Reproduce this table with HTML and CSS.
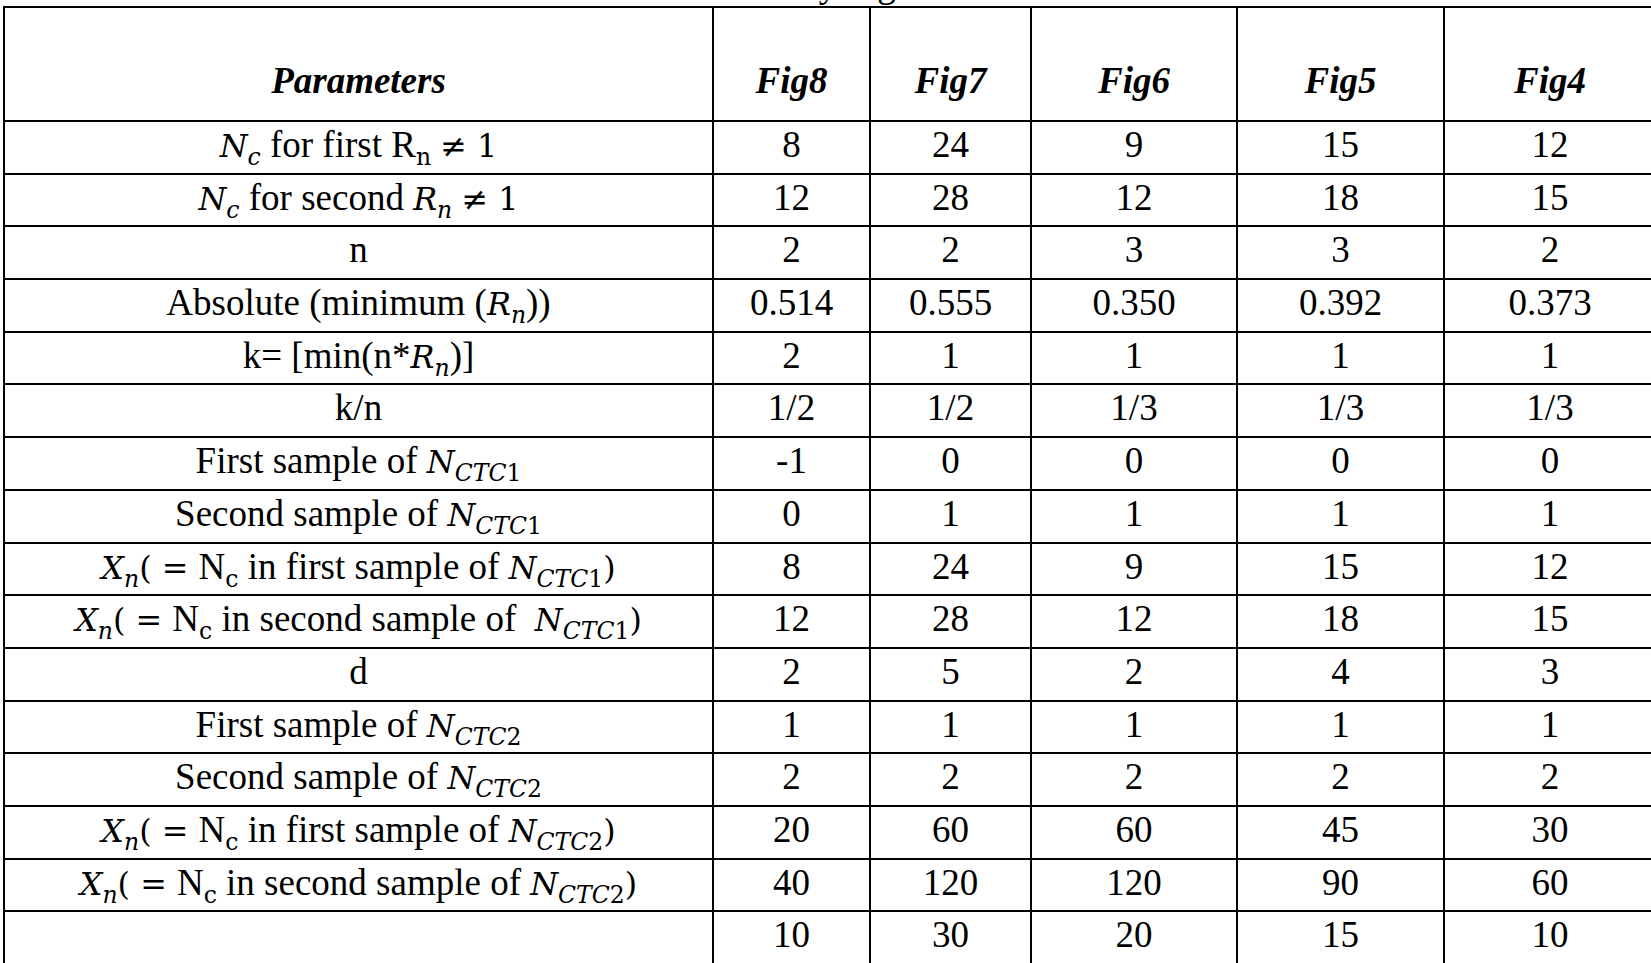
FILE: index.html
```html
<!DOCTYPE html>
<html lang="en">
<head>
<meta charset="utf-8">
<title>Parameters by figure</title>
<link rel="stylesheet" href="styles.css">
</head>
<body>
<div class="caption"><span class="caption-text">Table 2. Parameters obtained by Figures</span></div>
<div class="grid">
  <div class="cell head">Parameters</div>
  <div class="cell head">Fig8</div>
  <div class="cell head">Fig7</div>
  <div class="cell head">Fig6</div>
  <div class="cell head">Fig5</div>
  <div class="cell head">Fig4</div>

  <div class="cell"><span class="m">N<span class="sub">c</span></span> for first R<span class="mu"><span class="sub">n</span></span> <span class="mu">≠ 1</span></div>
  <div class="cell">8</div><div class="cell">24</div><div class="cell">9</div><div class="cell">15</div><div class="cell">12</div>

  <div class="cell"><span class="m">N<span class="sub">c</span></span> for second <span class="m">R<span class="sub">n</span></span> <span class="mu">≠ 1</span></div>
  <div class="cell">12</div><div class="cell">28</div><div class="cell">12</div><div class="cell">18</div><div class="cell">15</div>

  <div class="cell">n</div>
  <div class="cell">2</div><div class="cell">2</div><div class="cell">3</div><div class="cell">3</div><div class="cell">2</div>

  <div class="cell">Absolute (minimum (<span class="m">R<span class="sub">n</span></span>))</div>
  <div class="cell">0.514</div><div class="cell">0.555</div><div class="cell">0.350</div><div class="cell">0.392</div><div class="cell">0.373</div>

  <div class="cell">k= [min(n*<span class="m">R<span class="sub">n</span></span>)]</div>
  <div class="cell">2</div><div class="cell">1</div><div class="cell">1</div><div class="cell">1</div><div class="cell">1</div>

  <div class="cell">k/n</div>
  <div class="cell">1/2</div><div class="cell">1/2</div><div class="cell">1/3</div><div class="cell">1/3</div><div class="cell">1/3</div>

  <div class="cell">First sample of <span class="m">N<span class="sub">CTC<span class="up">1</span></span></span></div>
  <div class="cell">-1</div><div class="cell">0</div><div class="cell">0</div><div class="cell">0</div><div class="cell">0</div>

  <div class="cell">Second sample of <span class="m">N<span class="sub">CTC<span class="up">1</span></span></span></div>
  <div class="cell">0</div><div class="cell">1</div><div class="cell">1</div><div class="cell">1</div><div class="cell">1</div>

  <div class="cell"><span class="m">X<span class="sub">n</span></span><span class="mu">( = </span>N<span class="mu"><span class="sub">c</span></span> in first sample of <span class="m">N<span class="sub">CTC<span class="up">1</span></span></span><span class="mu">)</span></div>
  <div class="cell">8</div><div class="cell">24</div><div class="cell">9</div><div class="cell">15</div><div class="cell">12</div>

  <div class="cell"><span class="m">X<span class="sub">n</span></span><span class="mu">( = </span>N<span class="mu"><span class="sub">c</span></span> in second sample of&nbsp; <span class="m">N<span class="sub">CTC<span class="up">1</span></span></span><span class="mu">)</span></div>
  <div class="cell">12</div><div class="cell">28</div><div class="cell">12</div><div class="cell">18</div><div class="cell">15</div>

  <div class="cell">d</div>
  <div class="cell">2</div><div class="cell">5</div><div class="cell">2</div><div class="cell">4</div><div class="cell">3</div>

  <div class="cell">First sample of <span class="m">N<span class="sub">CTC<span class="up">2</span></span></span></div>
  <div class="cell">1</div><div class="cell">1</div><div class="cell">1</div><div class="cell">1</div><div class="cell">1</div>

  <div class="cell">Second sample of <span class="m">N<span class="sub">CTC<span class="up">2</span></span></span></div>
  <div class="cell">2</div><div class="cell">2</div><div class="cell">2</div><div class="cell">2</div><div class="cell">2</div>

  <div class="cell"><span class="m">X<span class="sub">n</span></span><span class="mu">( = </span>N<span class="mu"><span class="sub">c</span></span> in first sample of <span class="m">N<span class="sub">CTC<span class="up">2</span></span></span><span class="mu">)</span></div>
  <div class="cell">20</div><div class="cell">60</div><div class="cell">60</div><div class="cell">45</div><div class="cell">30</div>

  <div class="cell"><span class="m">X<span class="sub">n</span></span><span class="mu">( = </span>N<span class="mu"><span class="sub">c</span></span> in second sample of <span class="m">N<span class="sub">CTC<span class="up">2</span></span></span><span class="mu">)</span></div>
  <div class="cell">40</div><div class="cell">120</div><div class="cell">120</div><div class="cell">90</div><div class="cell">60</div>

  <div class="cell"></div>
  <div class="cell">10</div><div class="cell">30</div><div class="cell">20</div><div class="cell">15</div><div class="cell">10</div>
</div>
</body>
</html>
```
FILE: styles.css
```css
html, body {
  margin: 0;
  padding: 0;
  overflow: hidden;
  background: #fff;
}

body {
  font-family: "Liberation Serif", "Times New Roman", serif;
  font-size: 37px;
  color: #000;
}

.caption {
  height: 6px;
  overflow: hidden;
  display: flex;
  align-items: flex-end;
  padding-left: 362px;
}

.caption-text {
  white-space: nowrap;
  line-height: normal;
}

.grid {
  display: grid;
  grid-template-columns: 707px 155px 159px 204px 205px 210px;
  grid-template-rows: 112px;
  grid-auto-rows: 50.7px;
  gap: 2px;
  padding: 2px 0 0 2px;
  margin-left: 3px;
  background: #000;
}

.cell {
  background: #fff;
  text-align: center;
  white-space: nowrap;
  padding-top: 1px;
}

.head {
  padding-top: 51px;
  font-weight: bold;
  font-style: italic;
}

.m {
  font-family: "DejaVu Serif", serif;
  font-style: italic;
  font-size: 0.86em;
}

.mu {
  font-family: "DejaVu Serif", serif;
  font-style: normal;
  font-size: 0.86em;
}

.sub {
  font-size: 0.74em;
  vertical-align: -0.34em;
  line-height: 0;
}

.up {
  font-style: normal;
}
```
